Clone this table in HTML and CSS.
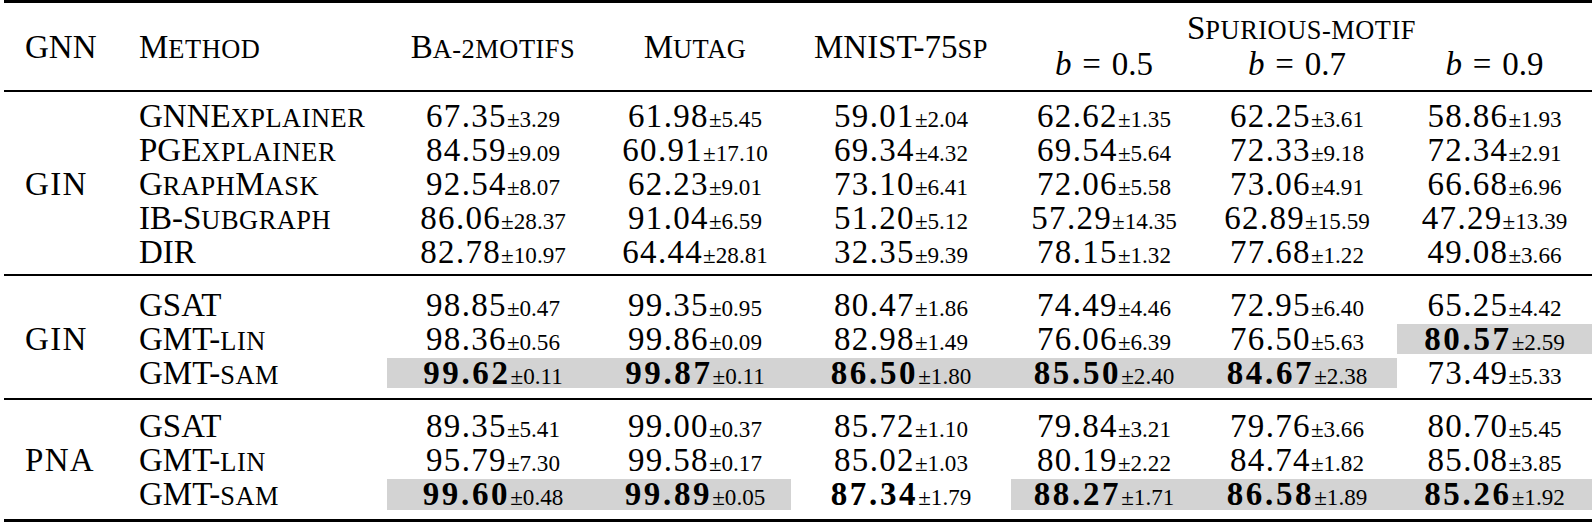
FILE: index.html
```html
<!DOCTYPE html>
<html lang="en">
<head>
<meta charset="utf-8">
<title>Explanation performance</title>
<link rel="stylesheet" href="styles.css">
</head>
<body>
<table class="results">
  <colgroup>
    <col class="w-gnn"><col class="w-method"><col class="w-ba"><col class="w-mutag"><col class="w-mnist"><col class="w-b5"><col class="w-b7"><col class="w-b9">
  </colgroup>
  <thead>
    <tr class="h1">
      <th rowspan="2" class="gnn">GNN</th>
      <th rowspan="2" class="method">M<span class="sc">ethod</span></th>
      <th rowspan="2">B<span class="sc">a-2motifs</span></th>
      <th rowspan="2">M<span class="sc">utag</span></th>
      <th rowspan="2">MNIST-75<span class="sc">sp</span></th>
      <th colspan="3" class="spur">S<span class="sc">purious-motif</span></th>
    </tr>
    <tr class="h2">
      <th><i>b</i><span class="eq">=</span>0.5</th>
      <th><i>b</i><span class="eq">=</span>0.7</th>
      <th><i>b</i><span class="eq">=</span>0.9</th>
    </tr>
  </thead>
  <tbody class="g1">
    <tr>
      <td rowspan="5" class="gnn">GIN</td>
      <td class="method">GNNE<span class="sc">xplainer</span></td>
      <td>67.35<span class="pm">±3.29</span></td>
      <td>61.98<span class="pm">±5.45</span></td>
      <td>59.01<span class="pm">±2.04</span></td>
      <td>62.62<span class="pm">±1.35</span></td>
      <td>62.25<span class="pm">±3.61</span></td>
      <td>58.86<span class="pm">±1.93</span></td>
    </tr>
    <tr>
      <td class="method">PGE<span class="sc">xplainer</span></td>
      <td>84.59<span class="pm">±9.09</span></td>
      <td>60.91<span class="pm">±17.10</span></td>
      <td>69.34<span class="pm">±4.32</span></td>
      <td>69.54<span class="pm">±5.64</span></td>
      <td>72.33<span class="pm">±9.18</span></td>
      <td>72.34<span class="pm">±2.91</span></td>
    </tr>
    <tr>
      <td class="method">G<span class="sc">raph</span>M<span class="sc">ask</span></td>
      <td>92.54<span class="pm">±8.07</span></td>
      <td>62.23<span class="pm">±9.01</span></td>
      <td>73.10<span class="pm">±6.41</span></td>
      <td>72.06<span class="pm">±5.58</span></td>
      <td>73.06<span class="pm">±4.91</span></td>
      <td>66.68<span class="pm">±6.96</span></td>
    </tr>
    <tr>
      <td class="method">IB-S<span class="sc">ubgraph</span></td>
      <td>86.06<span class="pm">±28.37</span></td>
      <td>91.04<span class="pm">±6.59</span></td>
      <td>51.20<span class="pm">±5.12</span></td>
      <td>57.29<span class="pm">±14.35</span></td>
      <td>62.89<span class="pm">±15.59</span></td>
      <td>47.29<span class="pm">±13.39</span></td>
    </tr>
    <tr>
      <td class="method">DIR</td>
      <td>82.78<span class="pm">±10.97</span></td>
      <td>64.44<span class="pm">±28.81</span></td>
      <td>32.35<span class="pm">±9.39</span></td>
      <td>78.15<span class="pm">±1.32</span></td>
      <td>77.68<span class="pm">±1.22</span></td>
      <td>49.08<span class="pm">±3.66</span></td>
    </tr>
  </tbody>
  <tbody class="g2">
    <tr>
      <td rowspan="3" class="gnn">GIN</td>
      <td class="method">GSAT</td>
      <td>98.85<span class="pm">±0.47</span></td>
      <td>99.35<span class="pm">±0.95</span></td>
      <td>80.47<span class="pm">±1.86</span></td>
      <td>74.49<span class="pm">±4.46</span></td>
      <td>72.95<span class="pm">±6.40</span></td>
      <td>65.25<span class="pm">±4.42</span></td>
    </tr>
    <tr>
      <td class="method">GMT-<span class="sc">lin</span></td>
      <td>98.36<span class="pm">±0.56</span></td>
      <td>99.86<span class="pm">±0.09</span></td>
      <td>82.98<span class="pm">±1.49</span></td>
      <td>76.06<span class="pm">±6.39</span></td>
      <td>76.50<span class="pm">±5.63</span></td>
      <td class="best"><b>80.57</b><span class="pm">±2.59</span></td>
    </tr>
    <tr>
      <td class="method">GMT-<span class="sc">sam</span></td>
      <td class="best"><b>99.62</b><span class="pm">±0.11</span></td>
      <td class="best"><b>99.87</b><span class="pm">±0.11</span></td>
      <td class="best"><b>86.50</b><span class="pm">±1.80</span></td>
      <td class="best"><b>85.50</b><span class="pm">±2.40</span></td>
      <td class="best"><b>84.67</b><span class="pm">±2.38</span></td>
      <td>73.49<span class="pm">±5.33</span></td>
    </tr>
  </tbody>
  <tbody class="g3">
    <tr>
      <td rowspan="3" class="gnn">PNA</td>
      <td class="method">GSAT</td>
      <td>89.35<span class="pm">±5.41</span></td>
      <td>99.00<span class="pm">±0.37</span></td>
      <td>85.72<span class="pm">±1.10</span></td>
      <td>79.84<span class="pm">±3.21</span></td>
      <td>79.76<span class="pm">±3.66</span></td>
      <td>80.70<span class="pm">±5.45</span></td>
    </tr>
    <tr>
      <td class="method">GMT-<span class="sc">lin</span></td>
      <td>95.79<span class="pm">±7.30</span></td>
      <td>99.58<span class="pm">±0.17</span></td>
      <td>85.02<span class="pm">±1.03</span></td>
      <td>80.19<span class="pm">±2.22</span></td>
      <td>84.74<span class="pm">±1.82</span></td>
      <td>85.08<span class="pm">±3.85</span></td>
    </tr>
    <tr>
      <td class="method">GMT-<span class="sc">sam</span></td>
      <td class="best"><b>99.60</b><span class="pm">±0.48</span></td>
      <td class="best"><b>99.89</b><span class="pm">±0.05</span></td>
      <td><b>87.34</b><span class="pm">±1.79</span></td>
      <td class="best"><b>88.27</b><span class="pm">±1.71</span></td>
      <td class="best"><b>86.58</b><span class="pm">±1.89</span></td>
      <td class="best"><b>85.26</b><span class="pm">±1.92</span></td>
    </tr>
  </tbody>
</table>
</body>
</html>
```
FILE: styles.css
```css
html, body {
  margin: 0;
  padding: 0;
  background: #fff;
}

body {
  font-family: "Liberation Serif", "Times New Roman", serif;
  color: #000;
  font-size: 33px;
}

.results {
  margin-left: 4px;
  border-collapse: collapse;
  table-layout: fixed;
  width: 1588px;
  border-top: 3px solid #000;
  border-bottom: 3px solid #000;
}

.w-gnn { width: 118px; }
.w-method { width: 265px; }
.w-ba { width: 212px; }
.w-mutag { width: 192px; }
.w-mnist { width: 220px; }
.w-b5 { width: 186px; }
.w-b7 { width: 200px; }
.w-b9 { width: 195px; }

.sc {
  text-transform: uppercase;
  font-size: 0.8em;
  letter-spacing: 0.02em;
  line-height: 0;
}

.eq {
  margin: 0 0.33em;
}

th {
  font-weight: normal;
  text-align: center;
  padding: 0;
  line-height: 34px;
  white-space: nowrap;
}

.h1 th { height: 42px; }
.h1 th.spur { vertical-align: bottom; padding-bottom: 2px; }
.h2 th { height: 43px; vertical-align: top; }

thead {
  border-bottom: 2px solid #000;
}

tbody + tbody {
  border-top: 2px solid #000;
}

td {
  text-align: center;
  white-space: nowrap;
  padding: 0 0 4px;
  line-height: 30px;
  height: 30px;
  background-clip: content-box;
  letter-spacing: 0.04em;
}

tbody tr:first-child td { padding-top: 11px; }
tbody tr:last-child td { padding-bottom: 10px; }

.g1 tr:first-child td { padding-top: 9px; }
.g1 tr:last-child td { padding-bottom: 7px; }
.g2 tr:first-child td { padding-top: 14px; }

th.gnn {
  text-align: left;
  padding: 0 0 0 21px;
}

td.gnn {
  text-align: left;
  padding: 11px 0 10px 21px;
}

.g1 td.gnn { padding: 9px 0 7px 21px; }
.g2 td.gnn { padding: 14px 0 10px 21px; }

th.method, td.method {
  text-align: left;
  padding-left: 17px;
  letter-spacing: 0;
}

.pm {
  font-size: 0.7em;
  letter-spacing: 0;
  line-height: 0;
}

b {
  font-weight: bold;
  letter-spacing: 0.08em;
}

.best {
  background-color: #d3d3d3;
}
```
